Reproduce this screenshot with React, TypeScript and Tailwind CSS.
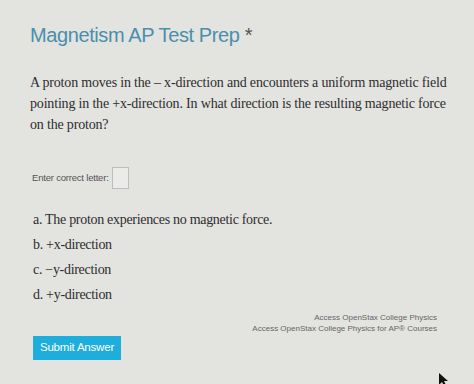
export default function App() {
  return (
    <div className="relative h-[384px] w-[474px] overflow-hidden bg-[#e3e3e0]">
      <div className="flex flex-col pl-[30px] pr-[30px] pt-[21px]">
        <h1 className="font-['Liberation_Sans',Arial,sans-serif] text-[20px] leading-[28px] tracking-[-0.4px] text-[#4a8fab]">
          Magnetism AP Test Prep <span className="text-[#555]">*</span>
        </h1>

        <p className="mt-[23px] whitespace-nowrap font-['Liberation_Serif','Times_New_Roman',serif] text-[14px] leading-[21px] tracking-[-0.18px] text-[#2e2e2e]">
          A proton moves in the – x-direction and encounters a uniform magnetic field
          <br />
          pointing in the +x-direction. In what direction is the resulting magnetic force
          <br />
          on the proton?
        </p>

        <div className="mt-[32px] flex items-center gap-[3px] font-['Liberation_Sans',Arial,sans-serif] text-[9.5px] tracking-[-0.2px] text-[#555]">
          <span className="ml-[2px]">Enter correct letter:</span>
          <span className="h-[22px] w-[17px] border border-[#bdbdbd] bg-[#ebebe9]" />
        </div>

        <ul className="mt-[20px] ml-[3px] flex flex-col gap-[4px] font-['Liberation_Serif','Times_New_Roman',serif] text-[14px] leading-[21px] tracking-[-0.3px] text-[#2e2e2e]">
          <li>a. The proton experiences no magnetic force.</li>
          <li>b. +x-direction</li>
          <li>c. −y-direction</li>
          <li>d. +y-direction</li>
        </ul>

        <div className="mt-[7px] flex flex-col items-end pr-[7px] font-['Liberation_Sans',Arial,sans-serif] text-[8px] leading-[11px] text-[#666]">
          <span>Access OpenStax College Physics</span>
          <span>Access OpenStax College Physics for AP® Courses</span>
        </div>

        <button className="ml-[3px] mt-[2px] h-[24px] w-[88px] bg-[#1daedb] font-['Liberation_Sans',Arial,sans-serif] text-[11.5px] tracking-[-0.2px] text-white">
          Submit Answer
        </button>
      </div>

      <svg className="absolute left-[438px] top-[372px]" width="12" height="16" viewBox="0 0 12 16">
        <path d="M1 1 L1 13 L4 10 L6.5 15 L8.5 14 L6 9 L10 9 Z" fill="#111" />
      </svg>
    </div>
  );
}
